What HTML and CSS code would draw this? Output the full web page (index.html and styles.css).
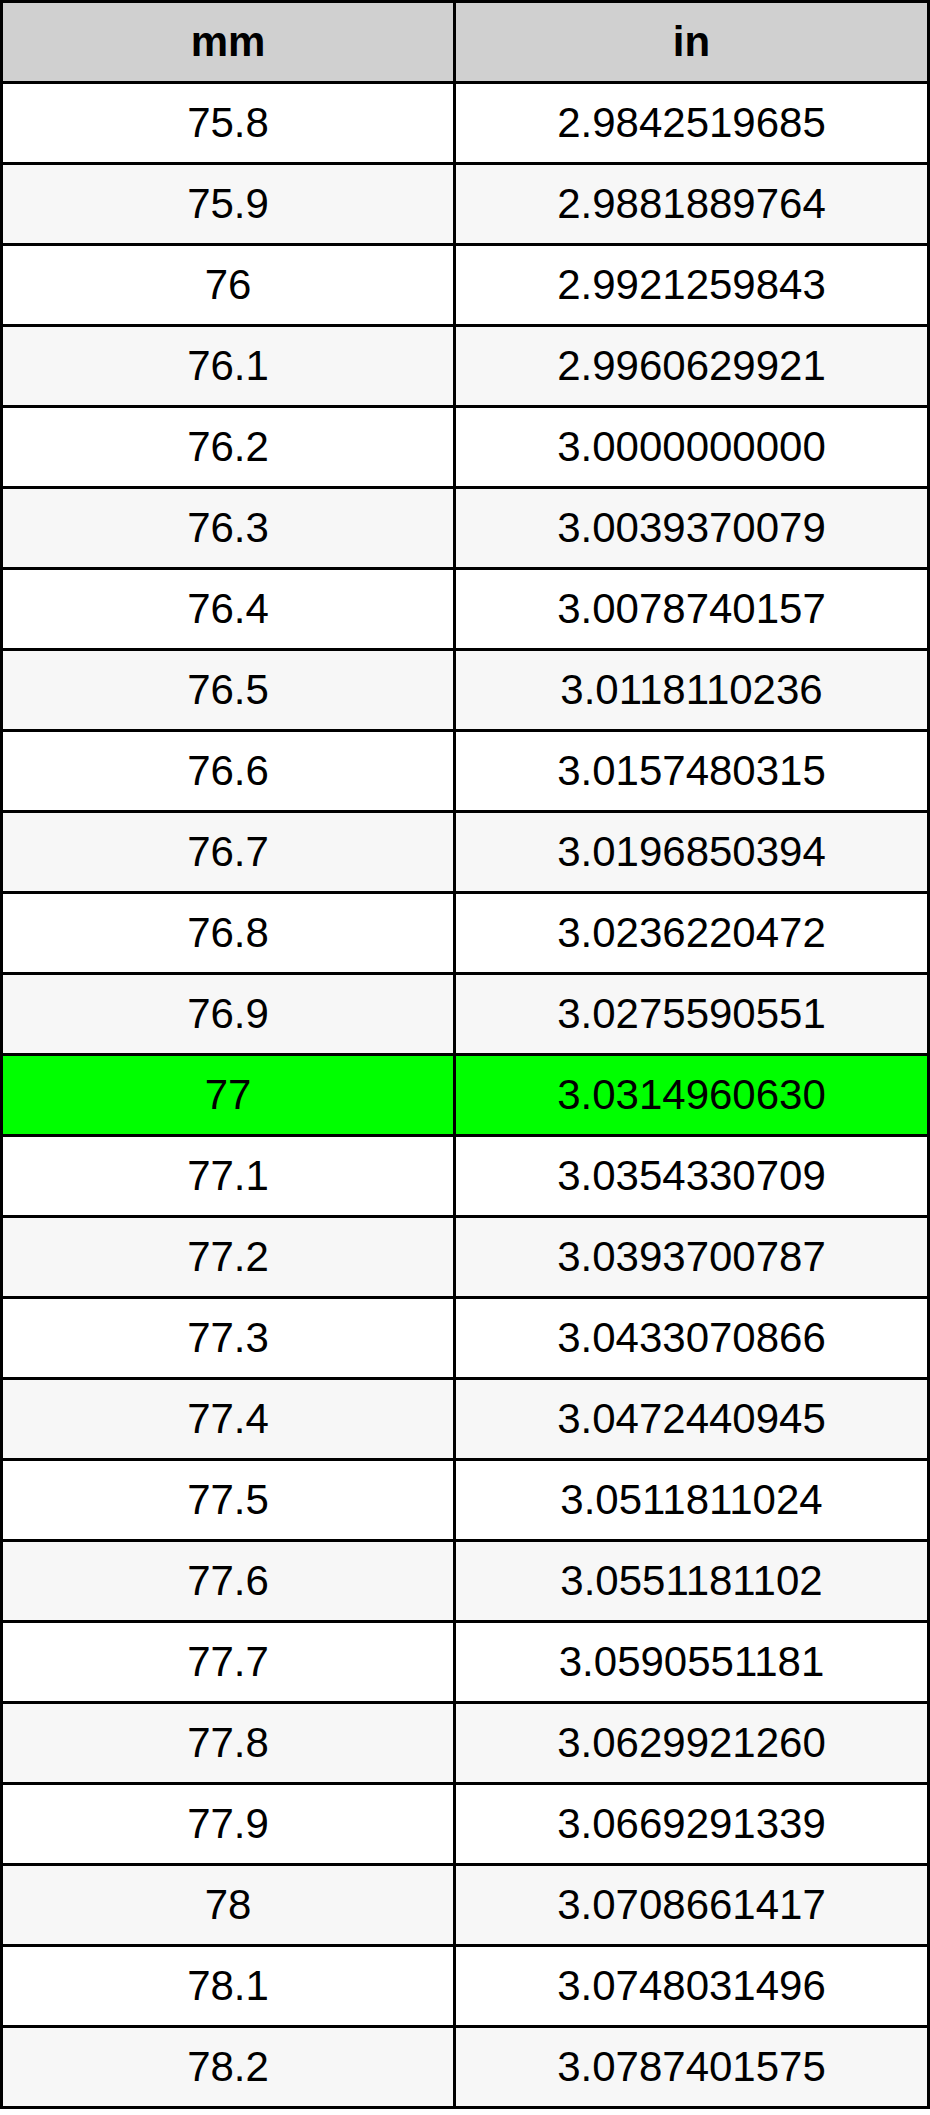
FILE: index.html
```html
<!DOCTYPE html>
<html>
<head>
<meta charset="utf-8">
<link rel="stylesheet" href="styles.css">
</head>
<body>
<div class="table">
  <div class="cell head">mm</div><div class="cell head">in</div>
  <div class="cell">75.8</div><div class="cell">2.9842519685</div>
  <div class="cell alt">75.9</div><div class="cell alt">2.9881889764</div>
  <div class="cell">76</div><div class="cell">2.9921259843</div>
  <div class="cell alt">76.1</div><div class="cell alt">2.9960629921</div>
  <div class="cell">76.2</div><div class="cell">3.0000000000</div>
  <div class="cell alt">76.3</div><div class="cell alt">3.0039370079</div>
  <div class="cell">76.4</div><div class="cell">3.0078740157</div>
  <div class="cell alt">76.5</div><div class="cell alt">3.0118110236</div>
  <div class="cell">76.6</div><div class="cell">3.0157480315</div>
  <div class="cell alt">76.7</div><div class="cell alt">3.0196850394</div>
  <div class="cell">76.8</div><div class="cell">3.0236220472</div>
  <div class="cell alt">76.9</div><div class="cell alt">3.0275590551</div>
  <div class="cell hl">77</div><div class="cell hl">3.0314960630</div>
  <div class="cell">77.1</div><div class="cell">3.0354330709</div>
  <div class="cell alt">77.2</div><div class="cell alt">3.0393700787</div>
  <div class="cell">77.3</div><div class="cell">3.0433070866</div>
  <div class="cell alt">77.4</div><div class="cell alt">3.0472440945</div>
  <div class="cell">77.5</div><div class="cell">3.0511811024</div>
  <div class="cell alt">77.6</div><div class="cell alt">3.0551181102</div>
  <div class="cell">77.7</div><div class="cell">3.0590551181</div>
  <div class="cell alt">77.8</div><div class="cell alt">3.0629921260</div>
  <div class="cell">77.9</div><div class="cell">3.0669291339</div>
  <div class="cell alt">78</div><div class="cell alt">3.0708661417</div>
  <div class="cell">78.1</div><div class="cell">3.0748031496</div>
  <div class="cell alt">78.2</div><div class="cell alt">3.0787401575</div>
</div>
</body>
</html>
```
FILE: styles.css
```css
html, body {
  margin: 0;
  padding: 0;
  background: #ffffff;
}
.table {
  display: grid;
  grid-template-columns: 450px 471px;
  grid-auto-rows: 78px;
  gap: 3px;
  padding: 3px;
  background: #000000;
  width: 924px;
  font-family: "Liberation Sans", Arial, sans-serif;
  font-size: 42px;
  color: #000000;
}
.cell {
  background: #ffffff;
  display: flex;
  align-items: center;
  justify-content: center;
}
.cell.alt {
  background: #f7f7f7;
}
.cell.head {
  background: #d0d0d0;
  font-weight: bold;
}
.cell.hl {
  background: #00ff00;
}
```
